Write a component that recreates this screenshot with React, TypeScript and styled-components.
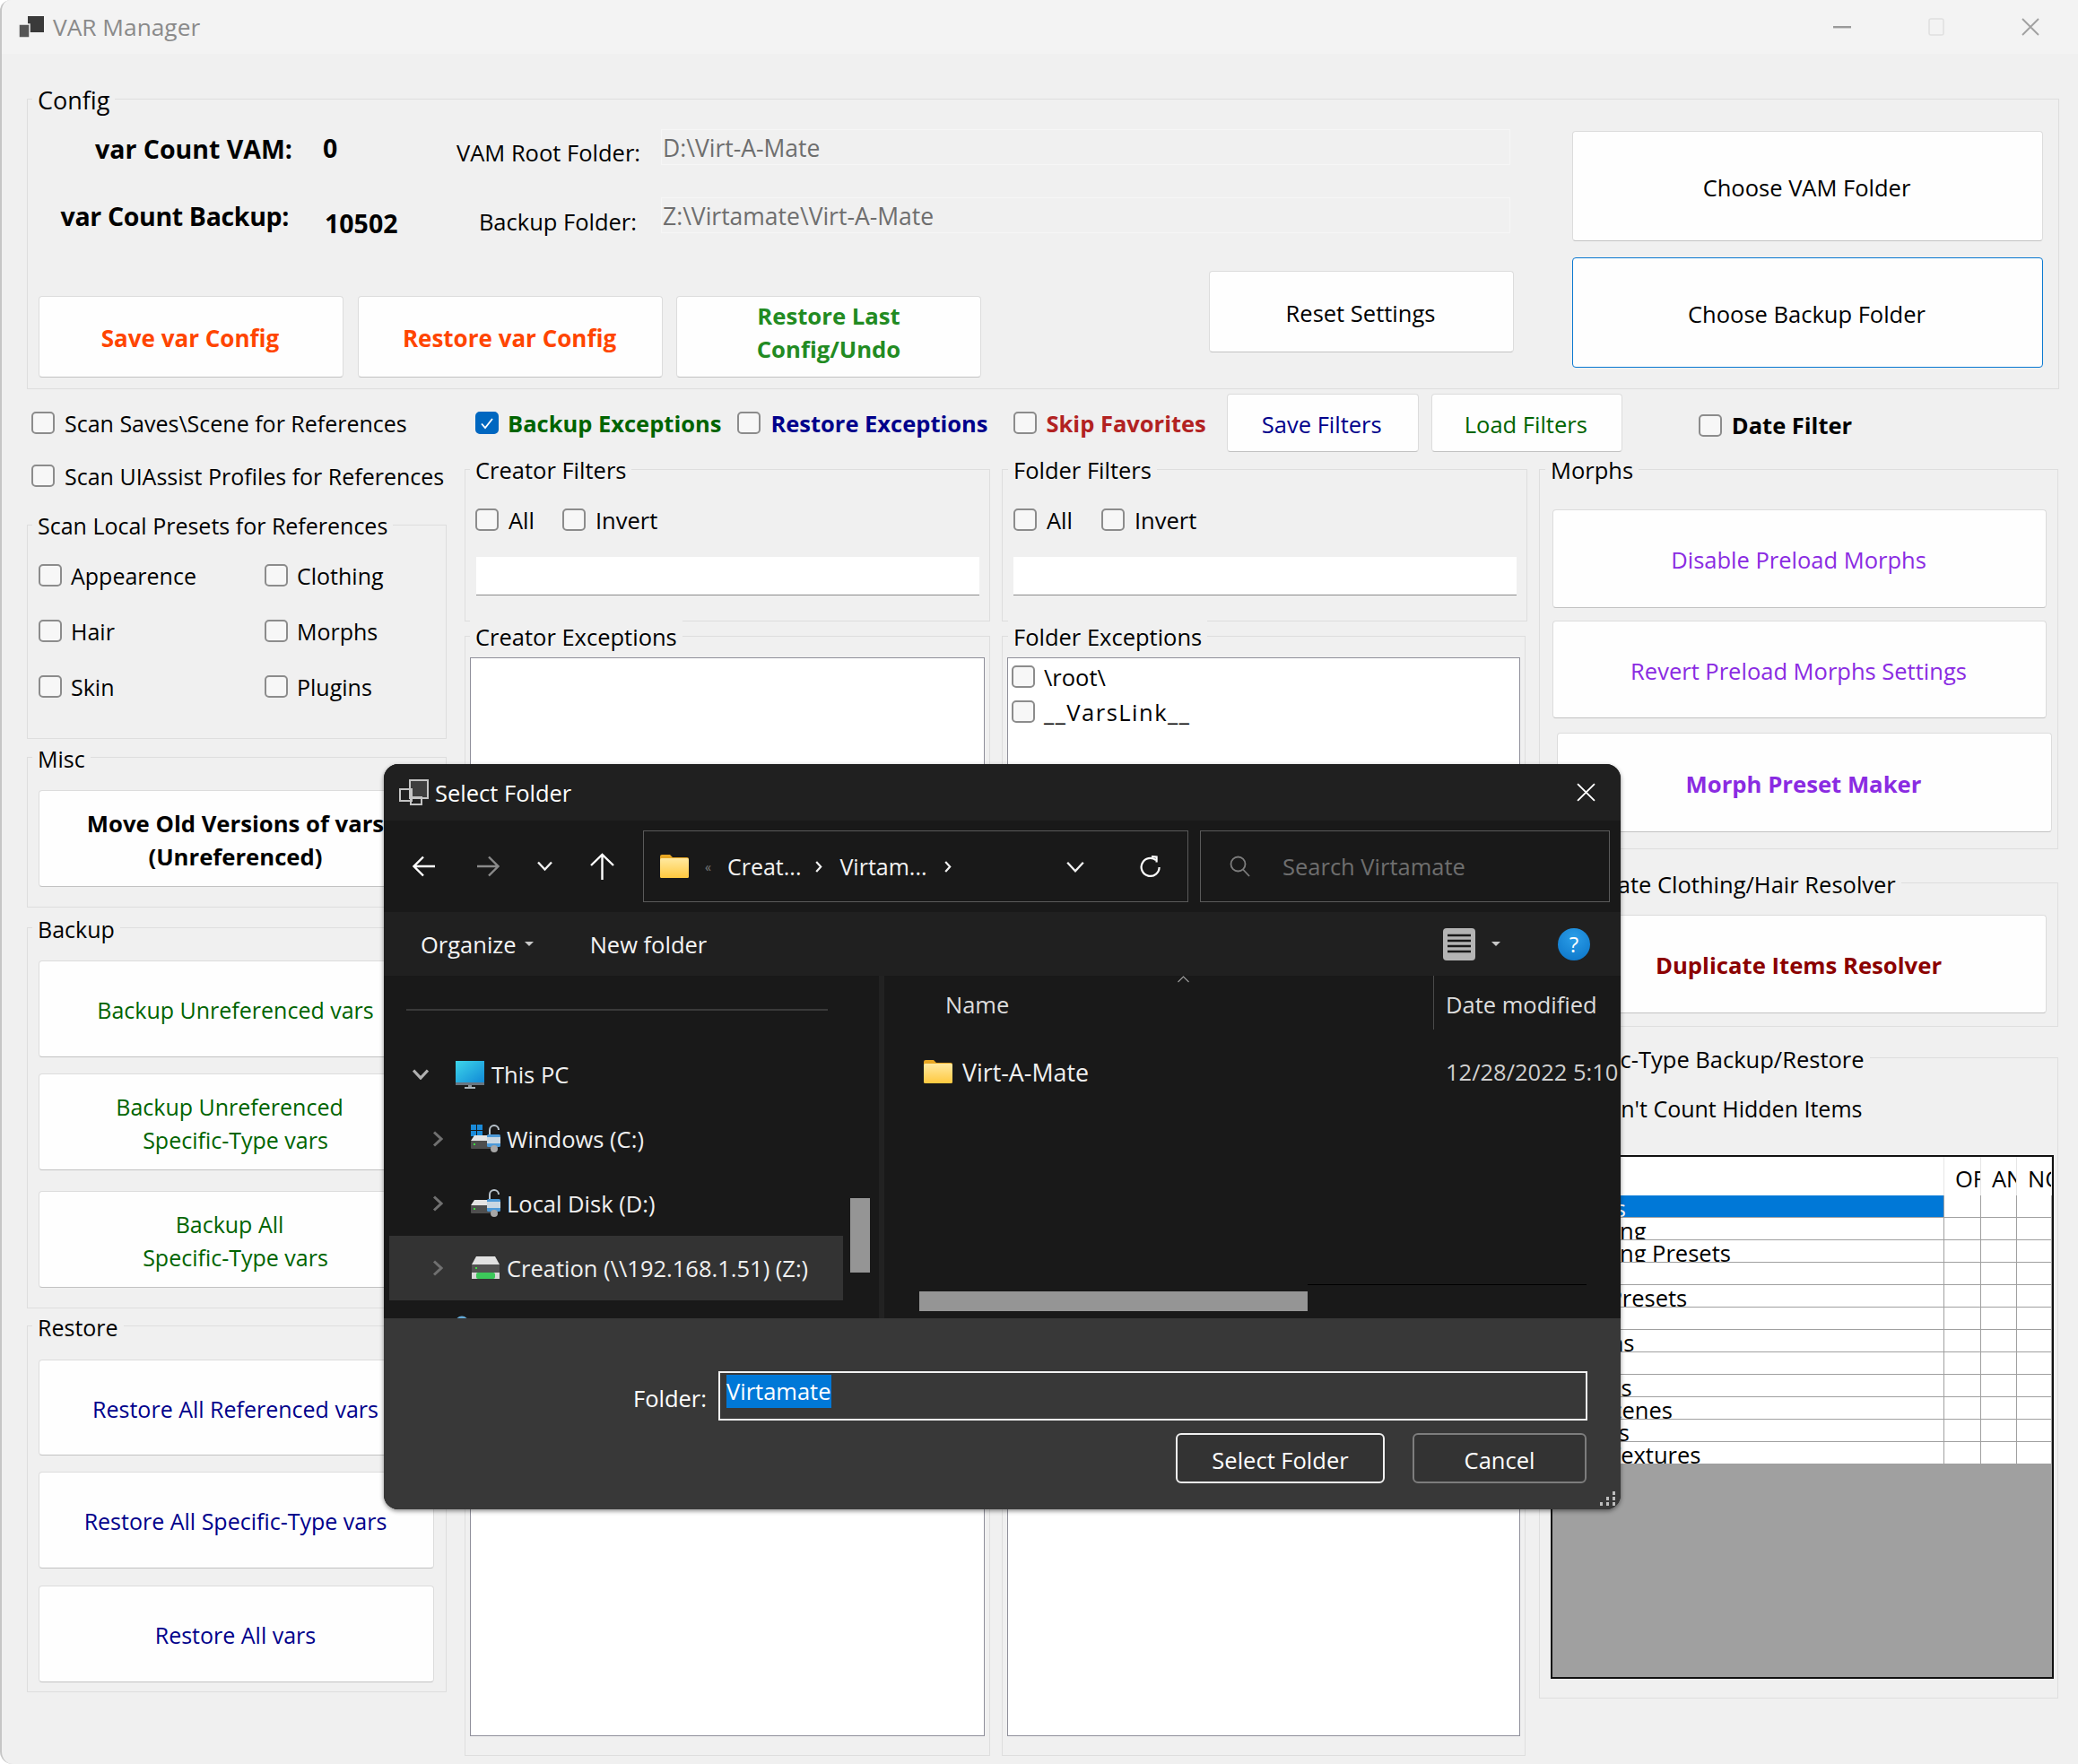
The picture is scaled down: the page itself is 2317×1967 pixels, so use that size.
import React from "react";
import styled, { createGlobalStyle } from "styled-components";

const Global = createGlobalStyle`
  html, body { margin: 0; padding: 0; background: #fff; }
  * { box-sizing: border-box; }
  body { font-family: "Open Sans", "Noto Sans", "Liberation Sans", sans-serif; font-size: 25.5px; color: #000; }
`;

const Page = styled.div`
  width: 2317px; height: 1967px; position: relative; overflow: hidden; background: #fff;
`;
const Win = styled.div`
  width: 2317px; height: 1967px; background: #f0f0f0; border-left: 2px solid #c6c6c6;
  border-radius: 12px 0 0 14px; overflow: hidden; display: flex; flex-direction: column;
`;
const TitleBar = styled.div`
  height: 60px; background: #f3f3f3; display: flex; align-items: center; padding-left: 19px; flex: none;
`;
const WinTitle = styled.span` margin-left: 10px; color: #8a8a8a; font-size: 26.3px; `;
const WinControls = styled.div`
  margin-left: auto; display: flex; align-items: center; padding-right: 43px; gap: 86px;
`;
const Content = styled.div` padding: 50px 21px 0 28px; flex: 1; min-height: 0; `;

const Group = styled.div<{ $h: number; $w?: number; $mt?: number; $pad?: string }>`
  position: relative; flex: none;
  height: ${p => p.$h}px;
  width: ${p => (p.$w ? p.$w + "px" : "auto")};
  margin-top: ${p => p.$mt ?? 0}px;
  padding: ${p => p.$pad ?? "0"};
  border: 1px solid #dedede;
`;
const Legend = styled.span<{ $fs?: number; $up?: boolean; $left?: number }>`
  position: absolute; left: ${p => p.$left ?? 5}px; top: ${p => (p.$up ? -18 : -17)}px; padding: 0 6px; line-height: 36px; background: #f0f0f0; white-space: nowrap;
  font-size: ${p => (p.$fs ? p.$fs + "px" : "inherit")};
`;

const ConfigGroup = styled(Group)` display: flex; `;
const ConfigLeft = styled.div` width: 1657px; flex: none; padding-left: 12px; `;
const FieldRow = styled.div<{ $mt: number }>`
  display: grid; grid-template-columns: 295px 60px 328px 970px; margin-top: ${p => p.$mt}px; height: 40px; margin-left: -12px; white-space: nowrap;
`;
const CountLabel = styled.div<{ $pr: number; $mt: number; $ls?: number }>`
  font-weight: 700; font-size: 28.5px; text-align: right; padding-right: ${p => p.$pr}px; margin-top: ${p => p.$mt}px; line-height: 36px;
  letter-spacing: ${p => p.$ls ?? 0}px;
`;
const CountValue = styled.div<{ $pl: number; $mt: number }>`
  font-weight: 700; font-size: 28.5px; padding-left: ${p => p.$pl}px; margin-top: ${p => p.$mt}px; line-height: 36px;
`;
const FolderLabel = styled.div<{ $pr: number; $mt: number }>`
  text-align: right; padding-right: ${p => p.$pr}px; margin-top: ${p => p.$mt}px; line-height: 36px;
`;
const PathInput = styled.input`
  height: 40px; width: 947px; margin-left: 23px; background: #f0f0f0; border: 1px solid #f6f6f6; color: #6e6e6e;
  font-family: inherit; font-size: 26.5px; padding: 2px 1px 0; outline: none;
`;
const ActionRow = styled.div` display: flex; align-items: flex-end; margin-top: 42px; height: 119px; padding-right: 7px; `;
const ConfigRight = styled.div` width: 525px; margin-left: 65px; padding-top: 35px; display: flex; flex-direction: column; gap: 18px; flex: none; `;

const Btn = styled.button<{ $w?: number; $h: number; $c?: string; $b?: boolean; $ml?: number; $mt?: number; $focus?: boolean; $top?: boolean; $lift?: boolean; $fs?: number }>`
  display: flex; align-items: center; justify-content: center; flex: none;
  width: ${p => (p.$w ? p.$w + "px" : "auto")};
  height: ${p => p.$h}px;
  margin-left: ${p => p.$ml ?? 0}px;
  margin-top: ${p => p.$mt ?? 0}px;
  align-self: ${p => (p.$top ? "flex-start" : "auto")};
  background: #fefefe;
  border: 1px solid ${p => (p.$focus ? "#0a78d0" : "#dcdcdc")};
  border-bottom-color: ${p => (p.$focus ? "#0a78d0" : "#c2c2c2")};
  border-radius: 4px;
  color: ${p => p.$c ?? "#000"};
  font-family: inherit;
  font-size: ${p => (p.$fs ? p.$fs + "px" : p.$b ? "25.7px" : "inherit")};
  font-weight: ${p => (p.$b ? 700 : 400)};
  line-height: 37px;
  padding: ${p => (p.$lift ? "0 0 9px" : "3px 2px 0 0")};
  text-align: center;
  white-space: pre;
  overflow: hidden;
`;

const Body = styled.div` display: grid; grid-template-columns: 468px 1778px; column-gap: 20px; `;
const LeftCol = styled.div` display: flex; flex-direction: column; padding-top: 25px; font-size: 25px; `;
const Check = styled.span<{ $on?: boolean }>`
  width: 26px; height: 25px; flex: none; display: inline-flex; align-items: center; justify-content: center;
  border: 2px solid ${p => (p.$on ? "#0067c0" : "#8c8c8c")};
  background: ${p => (p.$on ? "#0067c0" : "#f7f7f7")};
  border-radius: 5px;
`;
const CheckRow = styled.div<{ $c?: string; $b?: boolean; $ml?: number; $mt?: number; $gap?: number; $ls?: number; $fs?: number }>`
  display: flex; align-items: center; height: 25px; white-space: nowrap;
  gap: ${p => p.$gap ?? 11}px;
  color: ${p => p.$c ?? "#000"};
  font-weight: ${p => (p.$b ? 700 : 400)};
  font-size: ${p => (p.$fs ? p.$fs + "px" : "inherit")};
  letter-spacing: ${p => p.$ls ?? 0}px;
  margin-left: ${p => p.$ml ?? 0}px;
  margin-top: ${p => p.$mt ?? 0}px;
`;
const PresetGrid = styled.div`
  display: grid; grid-template-columns: 252px 160px; row-gap: 37px; padding: 43px 0 0 12px;
`;
const BtnStack = styled.div<{ $pt: number }>` display: flex; flex-direction: column; padding: ${p => p.$pt}px 0 0 12px; `;

const RightCol = styled.div` display: flex; flex-direction: column; `;
const FilterBar = styled.div`
  display: flex; align-items: center; height: 65px; margin-top: 5px; padding-left: 12px;
`;
const Columns = styled.div` display: grid; grid-template-columns: 586px 586px 579px; column-gap: 13px; margin-top: 19px; `;
const Stack = styled.div` display: flex; flex-direction: column; `;
const AllInvert = styled.div<{ $pl: number }>` display: flex; padding: 43px 0 0 ${p => p.$pl}px; `;
const FilterInput = styled.div`
  height: 43px; margin: 29px 11px 0 12px; background: #fff; border-bottom: 1px solid #8a8a8a;
`;
const ListBox = styled.div`
  height: 1203px; margin: 23px 5px 0; background: #fff; border: 1px solid #8f8f9a; padding: 8px 4px; display: flex; flex-direction: column; gap: 14px;
`;

const DataGrid = styled.div`
  margin: 40px 0 0 12px; width: 561px; height: 584px; border: 2px solid #111; background: #a0a0a0; overflow: hidden;
`;
const GridRow = styled.div<{ $head?: boolean }>`
  display: grid; grid-template-columns: 437px 41px 40px 39px; height: ${p => (p.$head ? 43 : 25)}px; background: #fff;
  border-bottom: 1px solid ${p => (p.$head ? "#fff" : "#a0a0a0")};
`;
const NameCell = styled.div<{ $sel?: boolean }>`
  padding-left: 6px; line-height: 28px; overflow: hidden; white-space: nowrap; height: 100%;
  background: ${p => (p.$sel ? "#0078d7" : "#fff")}; color: ${p => (p.$sel ? "#fff" : "#000")};
  border-right: 1px solid #a0a0a0;
`;
const FlagCell = styled.div`
  border-right: 1px solid #a0a0a0; height: 100%;
`;
const HeadCell = styled.div`
  padding: 6px 0 0 12px; line-height: 36px; overflow: hidden; white-space: nowrap; border-right: 1px solid #e6e6e6; height: 43px;
`;

/* ---- Dialog ---- */
const Dialog = styled.div`
  position: absolute; left: 428px; top: 852px; width: 1379px; height: 831px; border-radius: 16px; overflow: hidden;
  display: flex; flex-direction: column; color: #fff; box-shadow: 0 2px 5px rgba(0,0,0,.45); background: #202020;
`;
const DTitle = styled.div` height: 63px; flex: none; background: #202020; display: flex; align-items: center; padding: 0 28px 0 17px; `;
const DTitleText = styled.span` margin-left: 7px; `;
const DClose = styled.span` margin-left: auto; display: flex; `;
const DNav = styled.div` height: 102px; flex: none; background: #191919; display: flex; align-items: center; padding-left: 32px; `;
const IconSlot = styled.span<{ $ml?: number; $mr?: number; $auto?: boolean }>`
  display: inline-flex; flex: none; margin-left: ${p => (p.$auto ? "auto" : (p.$ml ?? 0) + "px")}; margin-right: ${p => p.$mr ?? 0}px;
`;
const AddressBox = styled.div`
  width: 608px; height: 80px; margin-left: 31px; flex: none; border: 1px solid #5a5a5a; display: flex; align-items: center; padding: 0 30px 0 18px; white-space: nowrap;
`;
const SearchBox = styled.div`
  width: 457px; height: 80px; margin-left: 13px; flex: none; border: 1px solid #5a5a5a; display: flex; align-items: center; padding-left: 32px; color: #6e6e6e;
`;
const Crumb = styled.span<{ $ml: number }>` margin-left: ${p => p.$ml}px; color: #f2f2f2; font-size: 25px; `;
const Chevrons = styled.span` margin-left: 18px; color: #7a7a7a; font-size: 14px; `;
const DTools = styled.div` height: 71px; flex: none; background: #202020; display: flex; align-items: center; padding: 0 34px 0 41px; white-space: nowrap; `;
const Caret = styled.span<{ $ml: number }>`
  margin-left: ${p => p.$ml}px; width: 0; height: 0; border-left: 5px solid transparent; border-right: 5px solid transparent; border-top: 5px solid #c8c8c8; flex: none;
`;
const ToolText = styled.span<{ $ml?: number }>` margin-left: ${p => p.$ml ?? 0}px; color: #f4f4f4; `;
const HelpDot = styled.span`
  width: 36px; height: 36px; border-radius: 50%; background: radial-gradient(circle at 50% 30%, #2b9ee8, #0a72c6); margin-left: 64px; display: flex; align-items: center; justify-content: center; font-size: 24px; line-height: 36px;
`;
const DBody = styled.div` height: 382px; flex: none; background: #191919; display: flex; `;
const NavPane = styled.div` width: 552px; flex: none; position: relative; overflow: hidden; `;
const NavRule = styled.div` margin: 37px 0 0 25px; width: 470px; height: 2px; background: #3a3a3a; `;
const TreeList = styled.div` margin-top: 35px; display: flex; flex-direction: column; `;
const TreeRow = styled.div<{ $sel?: boolean; $root?: boolean }>`
  height: 72px; margin-left: 6px; width: 506px; flex: none; display: flex; align-items: center; white-space: nowrap;
  padding-left: ${p => (p.$root ? 26 : 48)}px;
  background: ${p => (p.$sel ? "#333333" : "transparent")};
  color: #f0f0f0;
`;
const VThumb = styled.div` position: absolute; left: 520px; top: 248px; width: 22px; height: 83px; background: #959595; `;
const Splitter = styled.div` width: 6px; flex: none; background: #222; `;
const ListPane = styled.div` flex: 1; min-width: 0; position: relative; overflow: hidden; `;
const ListHead = styled.div` height: 60px; display: flex; color: #dcdcdc; `;
const NameHead = styled.div` width: 612px; flex: none; padding-left: 68px; line-height: 64px; position: relative; `;
const DateHead = styled.div` flex: 1; border-left: 1px solid #4a4a4a; padding-left: 13px; line-height: 64px; white-space: nowrap; `;
const SortMark = styled.span` position: absolute; left: 327px; top: 0; display: flex; `;
const FileRow = styled.div` display: flex; align-items: center; height: 40px; margin-top: 27px; white-space: nowrap; `;
const FileName = styled.div` width: 612px; flex: none; padding-left: 44px; display: flex; align-items: center; gap: 11px; color: #f0f0f0; font-size: 26.8px; `;
const FileDate = styled.div` padding-left: 14px; color: #d0d0d0; `;
const HThumb = styled.div` position: absolute; left: 39px; top: 352px; width: 433px; height: 22px; background: #959595; `;
const HLine = styled.div` position: absolute; left: 472px; top: 344px; width: 311px; height: 1px; background: #000; `;
const DFoot = styled.div` flex: 1; background: #383838; position: relative; padding: 59px 37px 0 0; `;
const FolderRow = styled.div` display: flex; justify-content: flex-end; align-items: center; gap: 13px; `;
const FolderLbl = styled.span` padding-top: 4px; `;
const FolderField = styled.div`
  width: 969px; height: 55px; border: 2px solid #f2f2f2; padding: 2px 0 0 7px; line-height: 37px;
`;
const Selected = styled.span` display: inline-block; background: #0078d7; color: #fff; `;
const DButtons = styled.div` display: flex; justify-content: flex-end; gap: 31px; margin-top: 14px; padding-right: 1px; `;
const DBtn = styled.div<{ $w: number; $def?: boolean }>`
  width: ${p => p.$w}px; height: 56px; border-radius: 6px; background: #333; display: flex; align-items: center; justify-content: center;
  border: 2px solid ${p => (p.$def ? "#f0f0f0" : "#7d7d7d")}; padding-top: 3px;
`;
const Grip = styled.span` position: absolute; right: 5px; bottom: 4px; display: flex; `;

/* ---- Icons ---- */
const AppIcon = () => (
  <svg width="28" height="25" viewBox="0 0 28 25"><rect x="10" y="0" width="18" height="18" fill="#3a3a3a" /><rect x="0" y="9" width="12" height="15" fill="#555" stroke="#f3f3f3" strokeWidth="1.5" /></svg>
);
const MinIcon = () => <svg width="20" height="3"><rect width="20" height="2.4" fill="#9a9a9a" /></svg>;
const MaxIcon = () => <svg width="18" height="20"><rect x="1" y="1" width="16" height="18" rx="2" fill="none" stroke="#e0e0e0" strokeWidth="1.5" /></svg>;
const XIcon = ({ s = 20, c = "#a0a0a0", w = 1.8 }: { s?: number; c?: string; w?: number }) => (
  <svg width={s} height={s} viewBox="0 0 20 20"><path d="M1 1l18 18M19 1L1 19" stroke={c} strokeWidth={w} fill="none" /></svg>
);
const Tick = () => <svg width="16" height="14" viewBox="0 0 16 14"><path d="M2 7.5l4 4.5 8-10" stroke="#fff" strokeWidth="1.8" fill="none" /></svg>;
const DlgIcon = () => (
  <svg width="33" height="29" viewBox="0 0 33 29" fill="none" stroke="#c4c4c4" strokeWidth="2"><rect x="12" y="1" width="20" height="20" fill="#3e3e3e" /><rect x="1" y="11" width="13" height="13" /><rect x="13" y="20" width="12" height="8" /></svg>
);
const Arrow = ({ dir, c = "#fff" }: { dir: "l" | "r"; c?: string }) => (
  <svg width="26" height="24" viewBox="0 0 26 24" fill="none" stroke={c} strokeWidth="2.4" style={{ transform: dir === "r" ? "scaleX(-1)" : undefined }}><path d="M1.5 12H25M12 1.5L1.5 12 12 22.5" /></svg>
);
const UpArrow = () => <svg width="29" height="30" viewBox="0 0 29 30" fill="none" stroke="#fff" strokeWidth="2.4"><path d="M14.5 30V2M2 14L14.5 2 27 14" /></svg>;
const ChevD = ({ w = 17, c = "#f0f0f0", sw = 2.4 }: { w?: number; c?: string; sw?: number }) => (
  <svg width={w} height={w * 0.65} viewBox="0 0 17 11" fill="none" stroke={c} strokeWidth={sw}><path d="M1 1.5l7.5 8 7.5-8" /></svg>
);
const ChevR = ({ c = "#f0f0f0", w = 8, h = 13 }: { c?: string; w?: number; h?: number }) => (
  <svg width={w} height={h} viewBox="0 0 8 13" fill="none" stroke={c} strokeWidth="2.2"><path d="M1.2 1l5 5.5-5 5.5" /></svg>
);
const TreeChev = () => <svg width="12" height="18" viewBox="0 0 12 18" fill="none" stroke="#707070" strokeWidth="3"><path d="M2 1.5L10 9l-8 7.5" /></svg>;
const FolderIcon = ({ id }: { id: string }) => (
  <svg width="32" height="26" viewBox="0 0 32 26" style={{ flex: "none" }}>
    <defs><linearGradient id={id} x1="0" y1="0" x2="0" y2="1"><stop offset="0" stopColor="#ffe9a0" /><stop offset="1" stopColor="#ffc93f" /></linearGradient></defs>
    <path d="M0 2a2 2 0 012-2h9l3 3h16a2 2 0 012 2v3H0z" fill="#e8a723" />
    <rect y="4" width="32" height="22" rx="1.5" fill={`url(#${id})`} />
  </svg>
);
const RefreshIcon = () => (
  <svg width="23" height="24" viewBox="0 0 23 24" fill="none" stroke="#fff" strokeWidth="2.2"><path d="M18 5.2A10 10 0 1021.6 13" /><path d="M13 1.2l5.6.4v5.8" /></svg>
);
const SearchIcon = () => (
  <svg width="23" height="24" viewBox="0 0 23 24" fill="none" stroke="#7d7d7d" strokeWidth="1.8"><circle cx="9.5" cy="9.5" r="8" /><path d="M15 15.5l7 7.5" /></svg>
);
const ViewIcon = () => (
  <svg width="36" height="36" viewBox="0 0 36 36"><rect width="36" height="36" rx="4" fill="#b4b4b4" /><path d="M5 8h26M5 14h26M5 20h26M5 26h26" stroke="#1a1a1a" strokeWidth="2.4" /></svg>
);
const MonitorIcon = () => (
  <svg width="32" height="31" viewBox="0 0 32 31">
    <defs><linearGradient id="mon" x1="0" y1="0" x2="1" y2="1"><stop offset="0" stopColor="#3dd6ea" /><stop offset="1" stopColor="#1189d6" /></linearGradient></defs>
    <rect width="32" height="24" fill="url(#mon)" /><rect y="24" width="32" height="3" fill="#687580" /><rect x="14" y="27" width="4" height="2" fill="#8a959c" /><rect x="10" y="29" width="12" height="2" fill="#aab4ba" />
  </svg>
);
const Disk = ({ y }: { y: number }) => (
  <g>
    <path d={`M4 ${y}h20l4 6H0z`} fill="#e4e4e4" />
    <rect y={y + 6} width="28" height="9" rx="1" fill="#4e4e4e" />
    <rect x="3" y={y + 9} width="2" height="2" fill="#3ddc3d" />
  </g>
);
const Lock = () => (
  <g>
    <path d="M21 12V6a5 5 0 0110 0" fill="none" stroke="#b9c3cc" strokeWidth="2" />
    <rect x="18" y="11" width="15" height="14" rx="1.5" fill="#4d9ad8" />
    <rect x="18" y="14" width="15" height="7" fill="#c9d7e2" />
    <circle cx="26" cy="27" r="4" fill="#a7a7a7" />
  </g>
);
const WinDrive = () => (
  <svg width="33" height="32" viewBox="0 0 33 32">
    <g fill="#1a8ad8"><rect x="0" y="0" width="6" height="6" /><rect x="7" y="0" width="6" height="6" /><rect x="0" y="7" width="6" height="6" /><rect x="7" y="7" width="6" height="6" /></g>
    <Disk y={12} /><Lock />
  </svg>
);
const LockDrive = () => <svg width="33" height="32" viewBox="0 0 33 32"><Disk y={12} /><Lock /></svg>;
const NetDrive = () => (
  <svg width="33" height="26" viewBox="0 0 33 26">
    <path d="M6 0h21l5 9H1z" fill="#e2e2e2" /><rect x="1" y="9" width="31" height="9" fill="#525252" /><rect x="5" y="12" width="2" height="2" fill="#3ddc3d" />
    <rect x="1" y="18" width="31" height="7" fill="#d8d8d8" /><rect x="6" y="18" width="21" height="7" rx="2" fill="#3cc85a" />
  </svg>
);
const GlobeTop = () => (
  <svg width="16" height="8" viewBox="0 0 16 8" style={{ marginLeft: 79, marginTop: 17 }}><circle cx="8" cy="8" r="7.5" fill="#63a9d6" /></svg>
);
const SortUp = () => <svg width="13" height="8" viewBox="0 0 13 8" fill="none" stroke="#9a9a9a" strokeWidth="1.2"><path d="M.5 7L6.5 1l6 6" /></svg>;
const GripIcon = () => (
  <svg width="18" height="16" viewBox="0 0 18 16" fill="#bdbdbd">
    <rect x="14" y="0" width="3" height="4" /><rect x="7" y="6" width="3" height="4" /><rect x="14" y="6" width="3" height="4" />
    <rect x="0" y="12" width="3" height="4" /><rect x="7" y="12" width="3" height="4" /><rect x="14" y="12" width="3" height="4" />
  </svg>
);

const NAVY = "#00008b";
const DKGREEN = "#006400";
const VIOLET = "#8a2be2";
const rows = ["Assets", "Clothing", "Clothing Presets", "Hair", "Hair Presets", "Looks", "Plugins", "Pose", "Scenes", "SubScenes", "Scripts", "Skin Textures"];

const LabeledCheck = ({ label, on, ...rest }: { label: string; on?: boolean; $c?: string; $b?: boolean; $ml?: number; $mt?: number; $gap?: number; $ls?: number; $fs?: number }) => (
  <CheckRow {...rest}>
    <Check $on={on}>{on && <Tick />}</Check>
    <span>{label}</span>
  </CheckRow>
);

export default function App() {
  return (
    <Page>
      <Global />
      <Win>
        <TitleBar>
          <AppIcon />
          <WinTitle>VAR Manager</WinTitle>
          <WinControls>
            <MinIcon />
            <MaxIcon />
            <XIcon />
          </WinControls>
        </TitleBar>
        <Content>
          <ConfigGroup $h={324} $w={2266}>
            <Legend $fs={27}>Config</Legend>
            <ConfigLeft>
              <FieldRow $mt={33}>
                <CountLabel $pr={0} $mt={4}>var Count VAM:</CountLabel>
                <CountValue $pl={34} $mt={3}>0</CountValue>
                <FolderLabel $pr={0} $mt={8}>VAM Root Folder:</FolderLabel>
                <PathInput readOnly value="D:\Virt-A-Mate" />
              </FieldRow>
              <FieldRow $mt={36}>
                <CountLabel $pr={4} $mt={3} $ls={-0.35}>var Count Backup:</CountLabel>
                <CountValue $pl={36} $mt={11}>10502</CountValue>
                <FolderLabel $pr={4} $mt={9}>Backup Folder:</FolderLabel>
                <PathInput readOnly value="Z:\Virtamate\Virt-A-Mate" />
              </FieldRow>
              <ActionRow>
                <Btn $w={340} $h={91} $c="#ff4500" $b $fs={26}>Save var Config</Btn>
                <Btn $w={340} $h={91} $c="#ff4500" $b $fs={26} $ml={16}>Restore var Config</Btn>
                <Btn $w={340} $h={91} $c="#228b22" $b $ml={15} $lift>Restore Last{"\n"}Config/Undo</Btn>
                <Btn $w={340} $h={91} $top $ml={254}>Reset Settings</Btn>
              </ActionRow>
            </ConfigLeft>
            <ConfigRight>
              <Btn $w={525} $h={123}>Choose VAM Folder</Btn>
              <Btn $w={525} $h={123} $focus>Choose Backup Folder</Btn>
            </ConfigRight>
          </ConfigGroup>

          <Body>
            <LeftCol>
              <LabeledCheck label="Scan Saves\Scene for References" $ml={5} />
              <LabeledCheck label="Scan UIAssist Profiles for References" $ml={5} $mt={34} />
              <Group $h={239} $mt={42} $pad="0">
                <Legend $up>Scan Local Presets for References</Legend>
                <PresetGrid>
                  {["Appearence", "Clothing", "Hair", "Morphs", "Skin", "Plugins"].map(l => (
                    <LabeledCheck key={l} label={l} $gap={10} />
                  ))}
                </PresetGrid>
              </Group>
              <Group $h={168} $mt={20}>
                <Legend>Misc</Legend>
                <BtnStack $pt={36}>
                  <Btn $w={441} $h={108} $b>Move Old Versions of vars{"\n"}(Unreferenced)</Btn>
                </BtnStack>
              </Group>
              <Group $h={425} $mt={22}>
                <Legend>Backup</Legend>
                <BtnStack $pt={36}>
                  <Btn $w={441} $h={108} $c={DKGREEN}>Backup Unreferenced vars</Btn>
                  <Btn $w={441} $h={108} $c={DKGREEN} $mt={18}>{"Backup Unreferenced\u00a0\u00a0\nSpecific-Type vars"}</Btn>
                  <Btn $w={441} $h={108} $c={DKGREEN} $mt={23}>{"Backup All\u00a0\u00a0\nSpecific-Type vars"}</Btn>
                </BtnStack>
              </Group>
              <Group $h={409} $mt={19}>
                <Legend>Restore</Legend>
                <BtnStack $pt={37}>
                  <Btn $w={441} $h={107} $c={NAVY}>Restore All Referenced vars</Btn>
                  <Btn $w={441} $h={108} $c={NAVY} $mt={18}>Restore All Specific-Type vars</Btn>
                  <Btn $w={441} $h={108} $c={NAVY} $mt={19}>Restore All vars</Btn>
                </BtnStack>
              </Group>
            </LeftCol>

            <RightCol>
              <FilterBar>
                <LabeledCheck on label="Backup Exceptions" $c={DKGREEN} $b $gap={10} />
                <LabeledCheck label="Restore Exceptions" $c={NAVY} $b $ml={18} />
                <LabeledCheck label="Skip Favorites" $c="#b22222" $b $ml={28} />
                <Btn $w={214} $h={65} $c={NAVY} $ml={23}>Save Filters</Btn>
                <Btn $w={213} $h={65} $c={DKGREEN} $ml={14}>Load Filters</Btn>
                <LabeledCheck label="Date Filter" $b $ml={85} $mt={5} />
              </FilterBar>
              <Columns>
                <Stack>
                  <Group $h={170}>
                    <Legend $up>Creator Filters</Legend>
                    <AllInvert $pl={11}>
                      <LabeledCheck label="All" />
                      <LabeledCheck label="Invert" $ml={31} />
                    </AllInvert>
                    <FilterInput />
                  </Group>
                  <Group $h={1249} $mt={16}>
                    <Legend $up>Creator Exceptions</Legend>
                    <ListBox />
                  </Group>
                </Stack>
                <Stack>
                  <Group $h={170}>
                    <Legend $up $left={6}>Folder Filters</Legend>
                    <AllInvert $pl={12}>
                      <LabeledCheck label="All" />
                      <LabeledCheck label="Invert" $ml={32} />
                    </AllInvert>
                    <FilterInput />
                  </Group>
                  <Group $h={1249} $mt={16} $w={584}>
                    <Legend $up $left={6}>Folder Exceptions</Legend>
                    <ListBox>
                      <LabeledCheck label="\root\" $gap={10} />
                      <LabeledCheck label="__VarsLink__" $gap={10} $ls={1.5} />
                    </ListBox>
                  </Group>
                </Stack>
                <Stack>
                  <Group $h={424} $pad="44px 0 0 14px">
                    <Legend $up $left={6}>Morphs</Legend>
                    <Btn $w={551} $h={110} $c={VIOLET}>Disable Preload Morphs</Btn>
                    <Btn $w={551} $h={109} $c={VIOLET} $mt={14}>Revert Preload Morphs Settings</Btn>
                    <Btn $w={552} $h={111} $c={VIOLET} $b $mt={16} $ml={5}>Morph Preset Maker</Btn>
                  </Group>
                  <Group $h={161} $mt={37} $pad="35px 0 0 14px">
                    <Legend $left={6}>Duplicate Clothing/Hair Resolver</Legend>
                    <Btn $w={551} $h={110} $c="#8b0000" $b>Duplicate Items Resolver</Btn>
                  </Group>
                  <Group $h={715} $mt={34}>
                    <Legend $left={6}>Specific-Type Backup/Restore</Legend>
                    <LabeledCheck label="Don't Count Hidden Items" $ml={20} $mt={43} $fs={25} />
                    <DataGrid>
                      <GridRow $head>
                        <HeadCell />
                        <HeadCell>OFF</HeadCell>
                        <HeadCell>AND</HeadCell>
                        <HeadCell>NOT</HeadCell>
                      </GridRow>
                      {rows.map((r, i) => (
                        <GridRow key={r}>
                          <NameCell $sel={i === 0}>{r}</NameCell>
                          <FlagCell />
                          <FlagCell />
                          <FlagCell />
                        </GridRow>
                      ))}
                    </DataGrid>
                  </Group>
                </Stack>
              </Columns>
            </RightCol>
          </Body>
        </Content>
      </Win>

      <Dialog>
        <DTitle>
          <DlgIcon />
          <DTitleText>Select Folder</DTitleText>
          <DClose><XIcon s={21} c="#fff" w={1.8} /></DClose>
        </DTitle>
        <DNav>
          <Arrow dir="l" />
          <IconSlot $ml={45}><Arrow dir="r" c="#8a8a8a" /></IconSlot>
          <IconSlot $ml={42}><ChevD /></IconSlot>
          <IconSlot $ml={41}><UpArrow /></IconSlot>
          <AddressBox>
            <FolderIcon id="fa" />
            <Chevrons>«</Chevrons>
            <Crumb $ml={18}>Creat...</Crumb>
            <IconSlot $ml={16}><ChevR /></IconSlot>
            <Crumb $ml={19}>Virtam...</Crumb>
            <IconSlot $ml={19}><ChevR /></IconSlot>
            <IconSlot $auto><ChevD w={20} sw={2} /></IconSlot>
            <IconSlot $ml={62}><RefreshIcon /></IconSlot>
          </AddressBox>
          <SearchBox>
            <SearchIcon />
            <IconSlot $ml={36}>Search Virtamate</IconSlot>
          </SearchBox>
        </DNav>
        <DTools>
          <ToolText>Organize</ToolText>
          <Caret $ml={9} />
          <ToolText $ml={63}>New folder</ToolText>
          <IconSlot $auto><ViewIcon /></IconSlot>
          <Caret $ml={18} />
          <HelpDot>?</HelpDot>
        </DTools>
        <DBody>
          <NavPane>
            <NavRule />
            <TreeList>
              <TreeRow $root>
                <ChevD w={18} c="#b0b0b0" sw={3} />
                <IconSlot $ml={30} $mr={8}><MonitorIcon /></IconSlot>
                This PC
              </TreeRow>
              <TreeRow>
                <TreeChev />
                <IconSlot $ml={31} $mr={7}><WinDrive /></IconSlot>
                Windows (C:)
              </TreeRow>
              <TreeRow>
                <TreeChev />
                <IconSlot $ml={31} $mr={7}><LockDrive /></IconSlot>
                Local Disk (D:)
              </TreeRow>
              <TreeRow $sel>
                <TreeChev />
                <IconSlot $ml={31} $mr={7}><NetDrive /></IconSlot>
                Creation (\\192.168.1.51) (Z:)
              </TreeRow>
              <GlobeTop />
            </TreeList>
            <VThumb />
          </NavPane>
          <Splitter />
          <ListPane>
            <ListHead>
              <NameHead>
                Name
                <SortMark><SortUp /></SortMark>
              </NameHead>
              <DateHead>Date modified</DateHead>
            </ListHead>
            <FileRow>
              <FileName><FolderIcon id="fb" />Virt-A-Mate</FileName>
              <FileDate>12/28/2022 5:10 PM</FileDate>
            </FileRow>
            <HLine />
            <HThumb />
          </ListPane>
        </DBody>
        <DFoot>
          <FolderRow>
            <FolderLbl>Folder:</FolderLbl>
            <FolderField><Selected>Virtamate</Selected></FolderField>
          </FolderRow>
          <DButtons>
            <DBtn $w={233} $def>Select Folder</DBtn>
            <DBtn $w={194}>Cancel</DBtn>
          </DButtons>
          <Grip><GripIcon /></Grip>
        </DFoot>
      </Dialog>
    </Page>
  );
}
